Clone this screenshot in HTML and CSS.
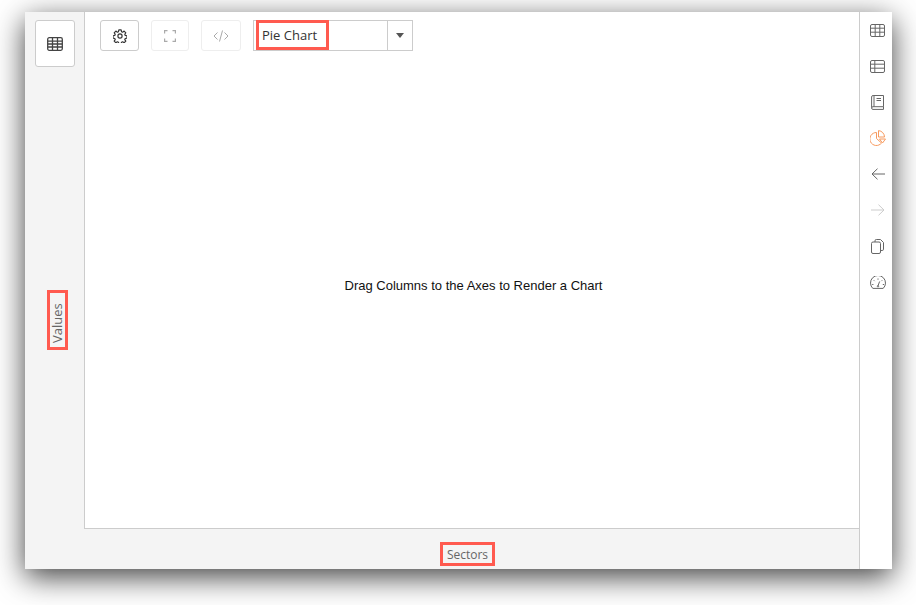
FILE: index.html
```html
<!DOCTYPE html>
<html lang="en">
<head>
    <meta charset="UTF-8">
    <title>Pie Chart</title>
    <link rel="stylesheet" href="styles.css">
</head>
<body>
    <div class="window">
        <div class="left-rail">
            <button class="table-btn">
                <svg width="16" height="14" viewBox="0 0 16 14" fill="none" stroke="#444" stroke-width="1.3"><rect x="0.7" y="0.7" width="14.6" height="12.6" rx="1.5"/><path d="M0.7 4.2h14.6M0.7 7h14.6M0.7 10h14.6M5.5 0.7v12.6M10.5 0.7v12.6"/></svg>
            </button>
            <div class="values-wrap"><span class="marked values">Values</span></div>
        </div>
        <div class="main">
            <div class="toolbar">
                <button class="tool gear">
                    <svg width="14" height="14" viewBox="0 0 24 24" fill="none" stroke="#333" stroke-width="2" stroke-linejoin="round"><circle cx="12" cy="12" r="3.6"/><path d="M10 1.5h4l.6 3.100 1.900.8 2.600-1.800 2.900 2.900-1.800 2.600.8 1.900 3 .6v4l-3 .6-.8 1.900 1.800 2.600-2.900 2.900-2.600-1.800-1.900.8-.6 3h-4l-.6-3-1.900-.8-2.600 1.800-2.900-2.900 1.800-2.600-.8-1.900-3-.6v-4l3-.6.8-1.900-1.800-2.600 2.900-2.900 2.600 1.800 1.900-.8z"/></svg>
                </button>
                <button class="tool off expand">
                    <svg width="12" height="12" viewBox="0 0 12 12" fill="none" stroke="#aaa" stroke-width="1.2"><path d="M.6 3.500V.6h2.900M8.500.6h2.900v2.900M11.400 8.500v2.900H8.500M3.500 11.400H.6V8.500"/></svg>
                </button>
                <button class="tool off code">
                    <svg width="16" height="12" viewBox="0 0 16 12" fill="none" stroke="#aaa" stroke-width="1"><path d="M4.500 2.500 1 6l3.500 3.500M11.500 2.500 15 6l-3.500 3.500M9.500.5l-3 11"/></svg>
                </button>
                <div class="chart-select">
                    <div class="select-value"><span class="marked pie">Pie Chart</span></div>
                    <div class="select-arrow"></div>
                </div>
            </div>
            <div class="empty-msg">Drag Columns to the Axes to Render a Chart</div>
        </div>
        <div class="right-rail">
            <span class="rail-icon">
                <svg width="15" height="13" viewBox="0 0 15 13" fill="none" stroke="#666" stroke-width="1"><rect x=".5" y=".5" width="14" height="12" rx="1.500"/><path d="M.5 4.200h14M.5 8.200h14M5.200.5v12M9.800.5v12"/></svg>
            </span>
            <span class="rail-icon">
                <svg width="15" height="13" viewBox="0 0 15 13" fill="none" stroke="#666" stroke-width="1"><rect x=".5" y=".5" width="14" height="12" rx="1.500"/><path d="M.5 4.200h14M.5 8.200h14M4.800.5v12"/></svg>
            </span>
            <span class="rail-icon">
                <svg width="13" height="15" viewBox="0 0 13 15" fill="none" stroke="#666" stroke-width="1"><path d="M.6 12.500V2A1.500 1.500 0 0 1 2.100.5h10.400v11.200H2A1.400 1.400 0 0 0 .6 13a1.400 1.400 0 0 0 1.400 1.400h10.500v-2.700M3 .5v11.200M5.500 3.500h4.500M5.500 5.500h4.500"/></svg>
            </span>
            <span class="rail-icon">
                <svg width="16" height="16" viewBox="0 0 16 16" fill="none" stroke="#f79a5e" stroke-width="1" stroke-linejoin="round"><path d="M6.500 2.500A6.500 6.500 0 1 0 11.500 13L6.500 8.500z"/><path d="M8.500.6a6.500 6.500 0 0 1 6 6.400h-6z"/><path d="M9.500 9h6l-3 4z"/></svg>
            </span>
            <span class="rail-icon">
                <svg width="14" height="12" viewBox="0 0 14 12" fill="none" stroke="#666" stroke-width="1"><path d="M6.500.7 1 6l5.500 5.300M1 6h13"/></svg>
            </span>
            <span class="rail-icon">
                <svg width="14" height="12" viewBox="0 0 14 12" fill="none" stroke="#ccc" stroke-width="1"><path d="M7.500.7 13 6l-5.500 5.300M13 6H0"/></svg>
            </span>
            <span class="rail-icon">
                <svg width="13" height="15" viewBox="0 0 13 15" fill="none" stroke="#666" stroke-width="1" stroke-linejoin="round"><path d="M4 3V1.800A1.300 1.300 0 0 1 5.300.5h4.200l3 3v6.700a1.300 1.300 0 0 1-1.300 1.300H9.500"/><rect x=".5" y="3" width="9" height="11.500" rx="1.500"/></svg>
            </span>
            <span class="rail-icon">
                <svg width="16" height="13" viewBox="0 0 16 13" fill="none" stroke="#666" stroke-width="1" stroke-linejoin="round"><path d="M2.800 12.400A7.500 7.500 0 1 1 13.200 12.400z"/><path d="M8 9.800 9.600 5.500M8 2.500v1.200M3.800 4.300l.8.800M2.200 8.500h1.200M12.800 8.500h1.200M12.200 4.300l-.8.800"/><circle cx="8" cy="10.300" r=".7"/></svg>
            </span>
        </div>
        <div class="bottom-bar"><span class="marked sectors">Sectors</span></div>
    </div>
</body>
</html>
```

FILE: styles.css
```css
html, body {
    margin: 0;
    padding: 0;
    height: 605px;
    overflow: hidden;
    background: #fff;
}
body {
    padding: 12px 0 0 25px;
    box-sizing: border-box;
    font-family: 'Open Sans', sans-serif;
}
.window {
    width: 867px;
    height: 557px;
    display: grid;
    grid-template-columns: 59px 1fr 33px;
    grid-template-rows: 1fr 40px;
    background: #f4f4f4;
    box-shadow: 0 8px 28px rgba(0, 0, 0, 0.75);
}
button {
    background: #fff;
    padding: 0;
    display: flex;
    align-items: center;
    justify-content: center;
    box-sizing: border-box;
}
.left-rail {
    grid-column: 1;
    grid-row: 1;
    display: flex;
    flex-direction: column;
    padding: 8px 0 0 10px;
}
.table-btn {
    width: 40px;
    height: 47px;
    border: 1px solid #ccc;
    border-radius: 3px;
}
.values-wrap {
    margin: 223px 0 0 12px;
}
.marked {
    border: 3px solid #ff5a4f;
    box-sizing: border-box;
    display: block;
    background: #fff;
}
.values {
    writing-mode: vertical-rl;
    transform: rotate(180deg);
    width: 21px;
    height: 60px;
    padding-top: 4px;
    font-size: 13px;
    line-height: 15px;
    color: #666;
    background: #f4f4f4;
}
.main {
    grid-column: 2;
    grid-row: 1;
    background: #fff;
    border-left: 1px solid #ccc;
    border-bottom: 1px solid #ccc;
    display: flex;
    flex-direction: column;
}
.toolbar {
    display: flex;
    padding: 8px 0 0 15px;
    height: 31px;
}
.tool {
    height: 31px;
    border-radius: 3px;
    border: 1px solid #ccc;
}
.tool.off {
    border-color: #eee;
}
.gear {
    width: 39px;
}
.expand {
    width: 38px;
    margin-left: 12px;
}
.code {
    width: 40px;
    margin-left: 12px;
}
.chart-select {
    width: 160px;
    height: 31px;
    margin-left: 12px;
    box-sizing: border-box;
    border: 1px solid #ccc;
    display: flex;
    background: #fff;
}
.select-value {
    width: 131px;
    border-right: 1px solid #ccc;
    padding-left: 2px;
}
.pie {
    width: 73px;
    height: 30px;
    margin-top: -1px;
    font-size: 13px;
    line-height: 24px;
    padding-left: 3px;
    color: #333;
}
.select-arrow {
    flex: 1;
    display: flex;
    align-items: center;
    justify-content: center;
}
.select-arrow::after {
    content: "";
    border-left: 4px solid transparent;
    border-right: 4px solid transparent;
    border-top: 5px solid #555;
}
.empty-msg {
    flex: 1;
    display: flex;
    align-items: center;
    justify-content: center;
    font-family: 'Liberation Sans', Arial, sans-serif;
    font-size: 13px;
    color: #111;
    padding: 0 0 9px 3px;
}
.right-rail {
    grid-column: 3;
    grid-row: 1 / 3;
    background: #fff;
    border-left: 1px solid #ccc;
    display: flex;
    flex-direction: column;
    padding-left: 3px;
}
.rail-icon {
    height: 36px;
    display: flex;
    align-items: center;
    justify-content: center;
}
.bottom-bar {
    grid-column: 1 / 3;
    grid-row: 2;
    padding: 13px 0 0 415px;
}
.sectors {
    width: 55px;
    height: 24px;
    font-size: 12px;
    line-height: 19px;
    text-align: center;
    color: #666;
    background: #f4f4f4;
}
```
